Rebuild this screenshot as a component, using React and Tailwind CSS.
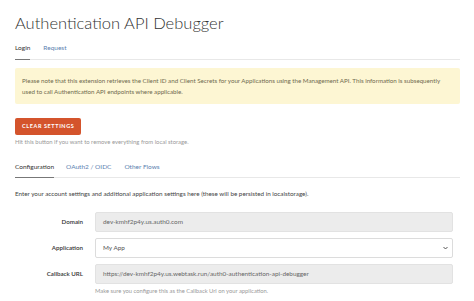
import React from 'react';

const font = { fontFamily: 'Lato, "Open Sans", sans-serif' };

const Field = ({ label, children, hint }) => (
  <div className="flex items-start">
    <label className="w-[80px] shrink-0 pr-[12px] text-right text-[6.2px] font-semibold text-[#333] leading-[20px]">
      {label}
    </label>
    <div className="flex-1">
      {children}
      {hint && <p className="mt-[3px] text-[5.8px] text-[#999] leading-[8px]">{hint}</p>}
    </div>
  </div>
);

const App = () => {
  return (
    <div className="w-[474px] h-[301px] bg-white overflow-hidden pl-[15px] pr-[14px]" style={font}>
      <h1 className="pt-[12px] text-[16.5px] font-light text-[#333] leading-[22px]">
        Authentication API Debugger
      </h1>

      {/* top tabs */}
      <div className="mt-[7px] flex border-b border-[#e8e8e8] text-[6.5px] leading-[10px]">
        <div className="pb-[6px] pt-[2px] border-b-[1.5px] border-[#777] -mb-px text-[#333]">Login</div>
        <div className="ml-[13px] pb-[6px] pt-[2px] text-[#5b7fb0]">Request</div>
      </div>

      <div className="mt-[8px] bg-[#fdf6d3] rounded-[2px] px-[7px] py-[7px] text-[6.2px] leading-[11px] text-[#6f6a4e]">
        Please note that this extension retrieves the Client ID and Client Secrets for your Applications using the Management API. This information is subsequently used to call Authentication API endpoints where applicable.
      </div>

      <button className="block mt-[14px] h-[17px] px-[7px] bg-[#d4542c] rounded-[2px] text-white text-[5.5px] font-bold tracking-[0.6px] uppercase">
        Clear Settings
      </button>
      <p className="mt-[2px] text-[5.9px] text-[#999] leading-[10px]">
        Hit this button if you want to remove everything from local storage.
      </p>

      {/* config tabs */}
      <div className="mt-[15px] flex border-b border-[#e8e8e8] text-[6.5px] leading-[10px]">
        <div className="pb-[5px] border-b-[1.5px] border-[#777] -mb-px text-[#333]">Configuration</div>
        <div className="ml-[12px] pb-[5px] text-[#5b7fb0]">OAuth2 / OIDC</div>
        <div className="ml-[13px] pb-[5px] text-[#5b7fb0]">Other Flows</div>
      </div>

      <p className="mt-[11px] text-[6.3px] text-[#444] leading-[10px]">
        Enter your account settings and additional application settings here (these will be persisted in localstorage).
      </p>

      <div className="mt-[13px] pr-[7px] flex flex-col gap-[6px]">
        <Field label="Domain">
          <div className="h-[20px] bg-[#ececec] border border-[#e2e2e2] rounded-[2px] px-[7px] flex items-center text-[6.4px] text-[#666]">
            dev-kmhf2p4y.us.auth0.com
          </div>
        </Field>
        <Field label="Application">
          <div className="h-[20px] bg-white border border-[#dcdcdc] rounded-[2px] px-[7px] flex items-center justify-between text-[6.4px] text-[#555]">
            <span>My App</span>
            <svg width="5" height="4" viewBox="0 0 10 8" className="mr-[-3px]">
              <path d="M1 2 L5 6 L9 2" stroke="#444" strokeWidth="1.8" fill="none" />
            </svg>
          </div>
        </Field>
        <Field label="Callback URL" hint="Make sure you configure this as the Callback Url on your application.">
          <div className="h-[20px] bg-[#ececec] border border-[#e2e2e2] rounded-[2px] px-[7px] flex items-center text-[6.4px] text-[#666]">
            https://dev-kmhf2p4y.us.webtask.run/auth0-authentication-api-debugger
          </div>
        </Field>
      </div>
    </div>
  );
};

export default App;
